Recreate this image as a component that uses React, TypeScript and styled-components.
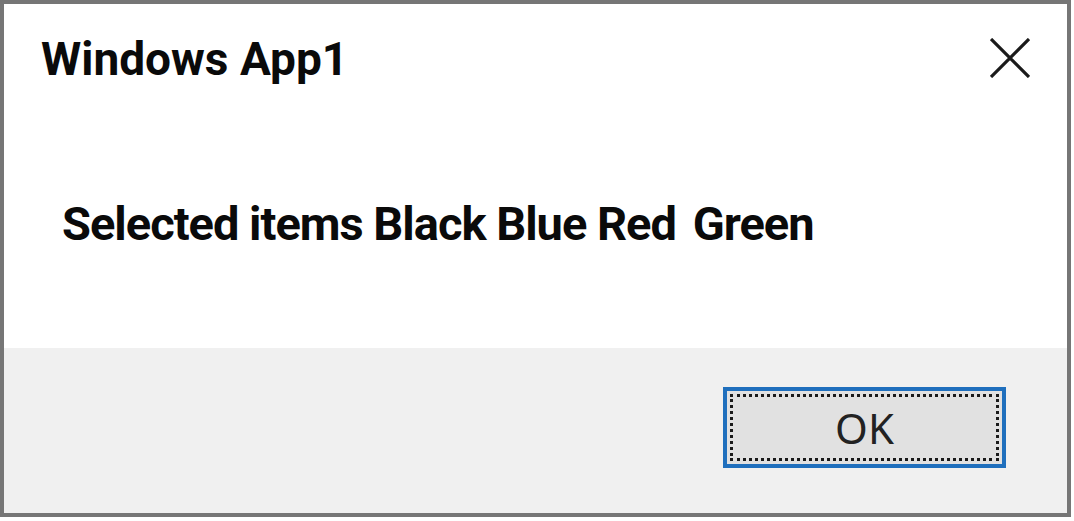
import styled, { createGlobalStyle } from "styled-components";

const GlobalStyle = createGlobalStyle`
  html, body {
    margin: 0;
    padding: 0;
    background: #ffffff;
  }
`;

const Window = styled.div`
  width: 1071px;
  height: 517px;
  box-sizing: border-box;
  border: 4px solid #767676;
  display: flex;
  flex-direction: column;
  background: #ffffff;
  font-family: Roboto, "Noto Sans", sans-serif;
  color: #0a0a0a;
`;

const Main = styled.div`
  height: 344px;
  display: flex;
  flex-direction: column;
`;

const TitleBar = styled.div`
  display: flex;
  align-items: flex-start;
  justify-content: space-between;
  padding: 32px 37px 0 37px;
`;

const Title = styled.h1`
  margin: 0;
  font-size: 46px;
  line-height: 1;
  font-weight: 700;
`;

const CloseButton = styled.button`
  width: 40px;
  height: 40px;
  margin-top: 2px;
  padding: 0;
  border: none;
  background: transparent;
  display: flex;
  align-items: center;
  justify-content: center;
`;

const Message = styled.p`
  margin: 118px 0 0 58px;
  font-size: 47px;
  line-height: 1;
  font-weight: 700;
  letter-spacing: -1px;
`;

const Word = styled.span`
  margin-left: 6px;
`;

const Footer = styled.div`
  flex: 1;
  background: #f0f0f0;
  display: flex;
  justify-content: flex-end;
  align-items: flex-start;
  padding: 39px 61px 0 0;
`;

const OkButton = styled.button`
  width: 283px;
  height: 81px;
  box-sizing: border-box;
  border: 4px solid #1f6fbd;
  background: #e1e1e1;
  padding: 3px;
  display: flex;
`;

const FocusRect = styled.span`
  flex: 1;
  border: 3px dotted #1a1a1a;
  display: flex;
  align-items: center;
  justify-content: center;
  font-family: "Noto Sans", "Open Sans", sans-serif;
  font-size: 42px;
  color: #222;
  line-height: 1;
`;

export default function App() {
  return (
    <>
      <GlobalStyle />
      <Window>
        <Main>
          <TitleBar>
            <Title>Windows App1</Title>
            <CloseButton aria-label="Close">
              <svg width="40" height="40" viewBox="0 0 40 40">
                <path d="M1 1 L39 39 M39 1 L1 39" stroke="#1a1a1a" strokeWidth="3.2" />
              </svg>
            </CloseButton>
          </TitleBar>
          <Message>
            Selected items Black Blue Red <Word>Green</Word>
          </Message>
        </Main>
        <Footer>
          <OkButton>
            <FocusRect>OK</FocusRect>
          </OkButton>
        </Footer>
      </Window>
    </>
  );
}
